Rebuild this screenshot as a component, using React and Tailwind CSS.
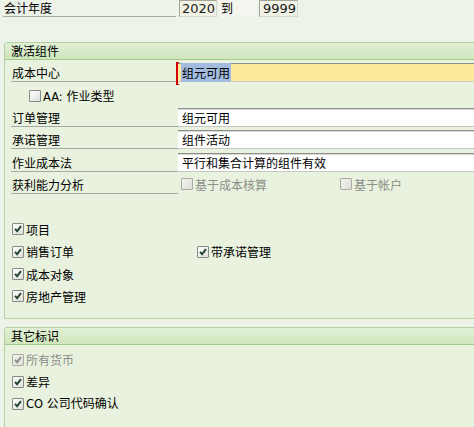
import React from "react";

function Check({ checked = false, disabled = false }) {
  return (
    <span
      className={
        disabled
          ? "inline-flex w-[12px] h-[12px] shrink-0 items-center justify-center border border-[#a9aba6] rounded-[1px] bg-gradient-to-br from-[#f4f4f2] to-[#dcdcd8]"
          : "inline-flex w-[12px] h-[12px] shrink-0 items-center justify-center border border-[#858a85] rounded-[1px] bg-gradient-to-br from-white to-[#dfe1dc]"
      }
    >
      {checked && (
        <svg width="8" height="8" viewBox="0 0 8 8">
          <path
            d="M1 3.8 L3.1 6.2 L7 1.2"
            fill="none"
            stroke={disabled ? "#8a8d88" : "#24452a"}
            strokeWidth="1.9"
          />
        </svg>
      )}
    </span>
  );
}

function Label({ children }) {
  return (
    <div className="ml-[6px] w-[167px] h-[19px] shrink-0 border-b border-[#a7aaa4] pl-[1px] leading-[19px]">
      {children}
    </div>
  );
}

function Field({ children }) {
  return (
    <div className="flex-1 h-[19px] bg-white border-t border-t-[#8d8f8b] border-b border-b-[#c6c8c4] shadow-[inset_0_1px_0_#d8d8d8] pl-[4px] leading-[17px] whitespace-nowrap">
      {children}
    </div>
  );
}

function CheckItem({ label, checked, disabled, className = "" }) {
  return (
    <div className={"flex items-center gap-[2px] " + className}>
      <Check checked={checked} disabled={disabled} />
      <span className={disabled ? "text-[#8c8e8a] leading-[19px]" : "leading-[19px]"}>{label}</span>
    </div>
  );
}

function Header({ children }) {
  return (
    <div className="h-[17px] border-b border-[#a6c98c] bg-gradient-to-b from-[#e1f0d6] to-[#cfe6bc] pl-[6px] leading-[16px]">
      {children}
    </div>
  );
}

export default function App() {
  return (
    <div className="w-[474px] h-[427px] overflow-hidden bg-[#eef3e9] text-[12px] text-black font-['Noto_Sans_CJK_SC',sans-serif] flex flex-col">
      {/* top row */}
      <div className="flex h-[18px] shrink-0">
        <div className="ml-[3px] w-[173px] h-[17px] border-b border-[#a7aaa4] pl-[1px] leading-[16px]">
          会计年度
        </div>
        <div className="ml-[3px] w-[38px] h-[17px] border border-t-[#a4a69c] border-l-[#a4a69c] border-r-[#d6d8cc] border-b-[#d6d8cc] bg-[#f1f2e5] pl-[2px] leading-[15px] text-[13px] text-[#1a1a1a] font-['DejaVu_Sans',sans-serif]">
          2020
        </div>
        <div className="ml-[2px] w-[38px] h-[17px] bg-[#f3f6ee] pl-[2px] leading-[16px]">到</div>
        <div className="ml-[2px] w-[39px] h-[17px] border border-t-[#a4a69c] border-l-[#a4a69c] border-r-[#d6d8cc] border-b-[#d6d8cc] bg-[#f1f2e5] pl-[3px] leading-[15px] text-[13px] text-[#1a1a1a] font-['DejaVu_Sans',sans-serif]">
          9999
        </div>
      </div>

      {/* group 1 */}
      <div className="ml-[4px] mt-[24px] w-[476px] shrink-0 border border-[#b3d29d] rounded-tl-[3px] bg-[#e9f2de]">
        <Header>激活组件</Header>
        <div className="pt-[3px] pb-[9px] flex flex-col">
          <div className="h-[22.4px] flex items-start">
            <Label>成本中心</Label>
            <div className="relative flex-1 h-[19px] bg-[#fdea9c] border-t border-t-[#8d8f8b] border-b border-b-[#c6c8c4] pl-[3px] leading-[17px]">
              <span className="absolute left-[-2px] top-[-2px] w-[3px] h-[23px] border-l-2 border-t border-b border-[#d40000]" />
              <span className="bg-[#a2bcdf] px-[1px] py-[1px]">组元可用</span>
            </div>
          </div>
          <div className="h-[22.4px] flex items-start pt-[1.5px]">
            <div className="ml-[24px] flex items-center gap-[2px] h-[19px]">
              <Check />
              <span className="leading-[19px]">
                <span className="font-['DejaVu_Sans',sans-serif] text-[11.5px]">AA: </span>作业类型
              </span>
            </div>
          </div>
          <div className="h-[22.4px] flex items-start">
            <Label>订单管理</Label>
            <Field>组元可用</Field>
          </div>
          <div className="h-[22.4px] flex items-start">
            <Label>承诺管理</Label>
            <Field>组件活动</Field>
          </div>
          <div className="h-[22.4px] flex items-start">
            <Label>作业成本法</Label>
            <Field>平行和集合计算的组件有效</Field>
          </div>
          <div className="h-[22.4px] flex items-start">
            <Label>获利能力分析</Label>
            <CheckItem className="ml-[3px] h-[19px]" label="基于成本核算" disabled />
            <CheckItem className="ml-[73px] h-[19px]" label="基于帐户" disabled />
          </div>
          <div className="h-[22.4px]" />
          <div className="h-[22.4px] flex items-start">
            <CheckItem className="ml-[7px] h-[19px]" label="项目" checked />
          </div>
          <div className="h-[22.4px] flex items-start">
            <CheckItem className="ml-[7px] w-[185px] h-[19px]" label="销售订单" checked />
            <CheckItem className="h-[19px]" label="带承诺管理" checked />
          </div>
          <div className="h-[22.4px] flex items-start">
            <CheckItem className="ml-[7px] h-[19px]" label="成本对象" checked />
          </div>
          <div className="h-[22.4px] flex items-start">
            <CheckItem className="ml-[7px] h-[19px]" label="房地产管理" checked />
          </div>
        </div>
      </div>

      {/* group 2 */}
      <div className="ml-[4px] mt-[8px] w-[476px] flex-1 border-t border-l border-[#b3d29d] rounded-tl-[3px] bg-[#e9f2de]">
        <Header>其它标识</Header>
        <div className="pt-[5px] flex flex-col">
          <div className="h-[22px] flex items-start">
            <CheckItem className="ml-[7px] h-[19px]" label="所有货币" checked disabled />
          </div>
          <div className="h-[22px] flex items-start">
            <CheckItem className="ml-[7px] h-[19px]" label="差异" checked />
          </div>
          <div className="h-[22px] flex items-start">
            <div className="ml-[7px] h-[19px] flex items-center gap-[2px]">
              <Check checked />
              <span className="leading-[19px]">
                <span className="font-['DejaVu_Sans',sans-serif] text-[11.5px]">CO </span>公司代码确认
              </span>
            </div>
          </div>
        </div>
      </div>
    </div>
  );
}
